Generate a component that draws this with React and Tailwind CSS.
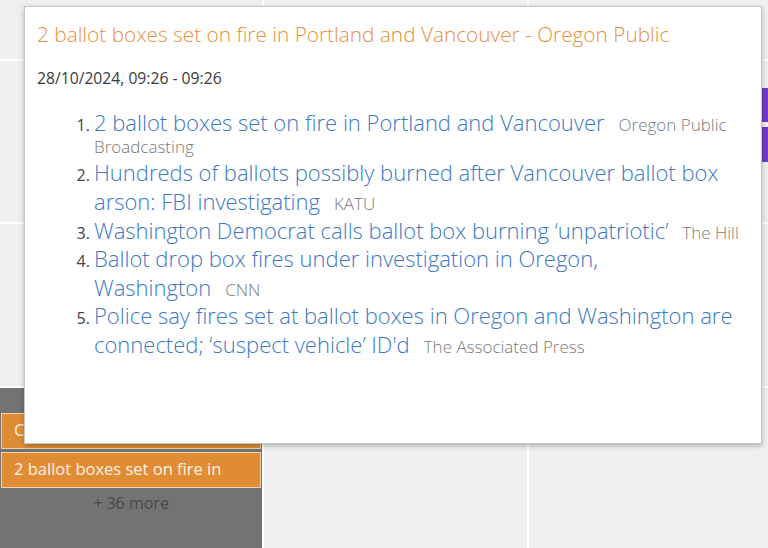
import React from "react";

const stories = [
  {
    title: "2 ballot boxes set on fire in Portland and Vancouver",
    source: "Oregon Public Broadcasting",
  },
  {
    title: "Hundreds of ballots possibly burned after Vancouver ballot box arson: FBI investigating",
    source: "KATU",
  },
  {
    title: "Washington Democrat calls ballot box burning \u2018unpatriotic\u2019",
    source: "The Hill",
  },
  {
    title: "Ballot drop box fires under investigation in Oregon, Washington",
    source: "CNN",
  },
  {
    title: "Police say fires set at ballot boxes in Oregon and Washington are connected; \u2018suspect vehicle\u2019 ID'd",
    source: "The Associated Press",
  },
];

const Cell = ({ dark = false, className = "", children }) => (
  <div className={`overflow-hidden ${dark ? "bg-[#737373]" : "bg-[#efefef]"} ${className}`}>
    {children}
  </div>
);

const EventChip = ({ label }) => (
  <div className="h-[36px] mx-[1px] mb-[3px] overflow-hidden bg-[#e08c34] border border-[#f2d2ad] px-[12px] pt-[4px] text-[16.5px] text-[#fdf1e3]">
    {label}
  </div>
);

const App = () => {
  return (
    <div className="relative w-[768px] h-[548px] overflow-hidden bg-white font-['Open_Sans',sans-serif]">
      {/* calendar grid behind the popup */}
      <div className="grid grid-cols-[262px_263px_1fr] grid-rows-[59px_161px_162px_1fr] gap-[2px] w-full h-full">
        <Cell />
        <Cell />
        <Cell />

        <Cell />
        <Cell />
        <Cell className="pt-[27px]">
          <div className="h-[34px] bg-[#6a3dc8]" />
          <div className="h-[35px] mt-[5px] bg-[#6a3dc8]" />
        </Cell>

        <Cell />
        <Cell />
        <Cell />

        <Cell dark className="pt-[25px]">
          <EventChip label="Canada election officials investigate ballot" />
          <EventChip label="2 ballot boxes set on fire in Portland and Vancouver" />
          <div className="text-center text-[16px] text-[#4a4a4a] mt-[2px]">+ 36 more</div>
        </Cell>
        <Cell />
        <Cell />
      </div>

      {/* event popup */}
      <div className="absolute left-[24px] top-[6px] w-[738px] h-[438px] bg-white border border-[#c6c6c6] shadow-[0_2px_5px_rgba(0,0,0,0.25)] px-[12px] pt-[12px]">
        <div className="text-[20.8px] font-light text-[#e98f3c] whitespace-nowrap">
          2 ballot boxes set on fire in Portland and Vancouver - Oregon Public
        </div>
        <div className="mt-[17px] text-[15.7px] text-[#3a3a3a]">28/10/2024, 09:26 - 09:26</div>
        <ol className="mt-[17px] pl-[57px] list-decimal text-[16px] leading-[1.3] text-[#444]">
          {stories.map((s) => (
            <li key={s.title}>
              <a className="text-[22px] font-light text-[#3b78c6]">{s.title}</a>
              <span className="ml-[14px] text-[17px] font-light text-[#7a7a7a]">{s.source}</span>
            </li>
          ))}
        </ol>
      </div>
    </div>
  );
};

export default App;
